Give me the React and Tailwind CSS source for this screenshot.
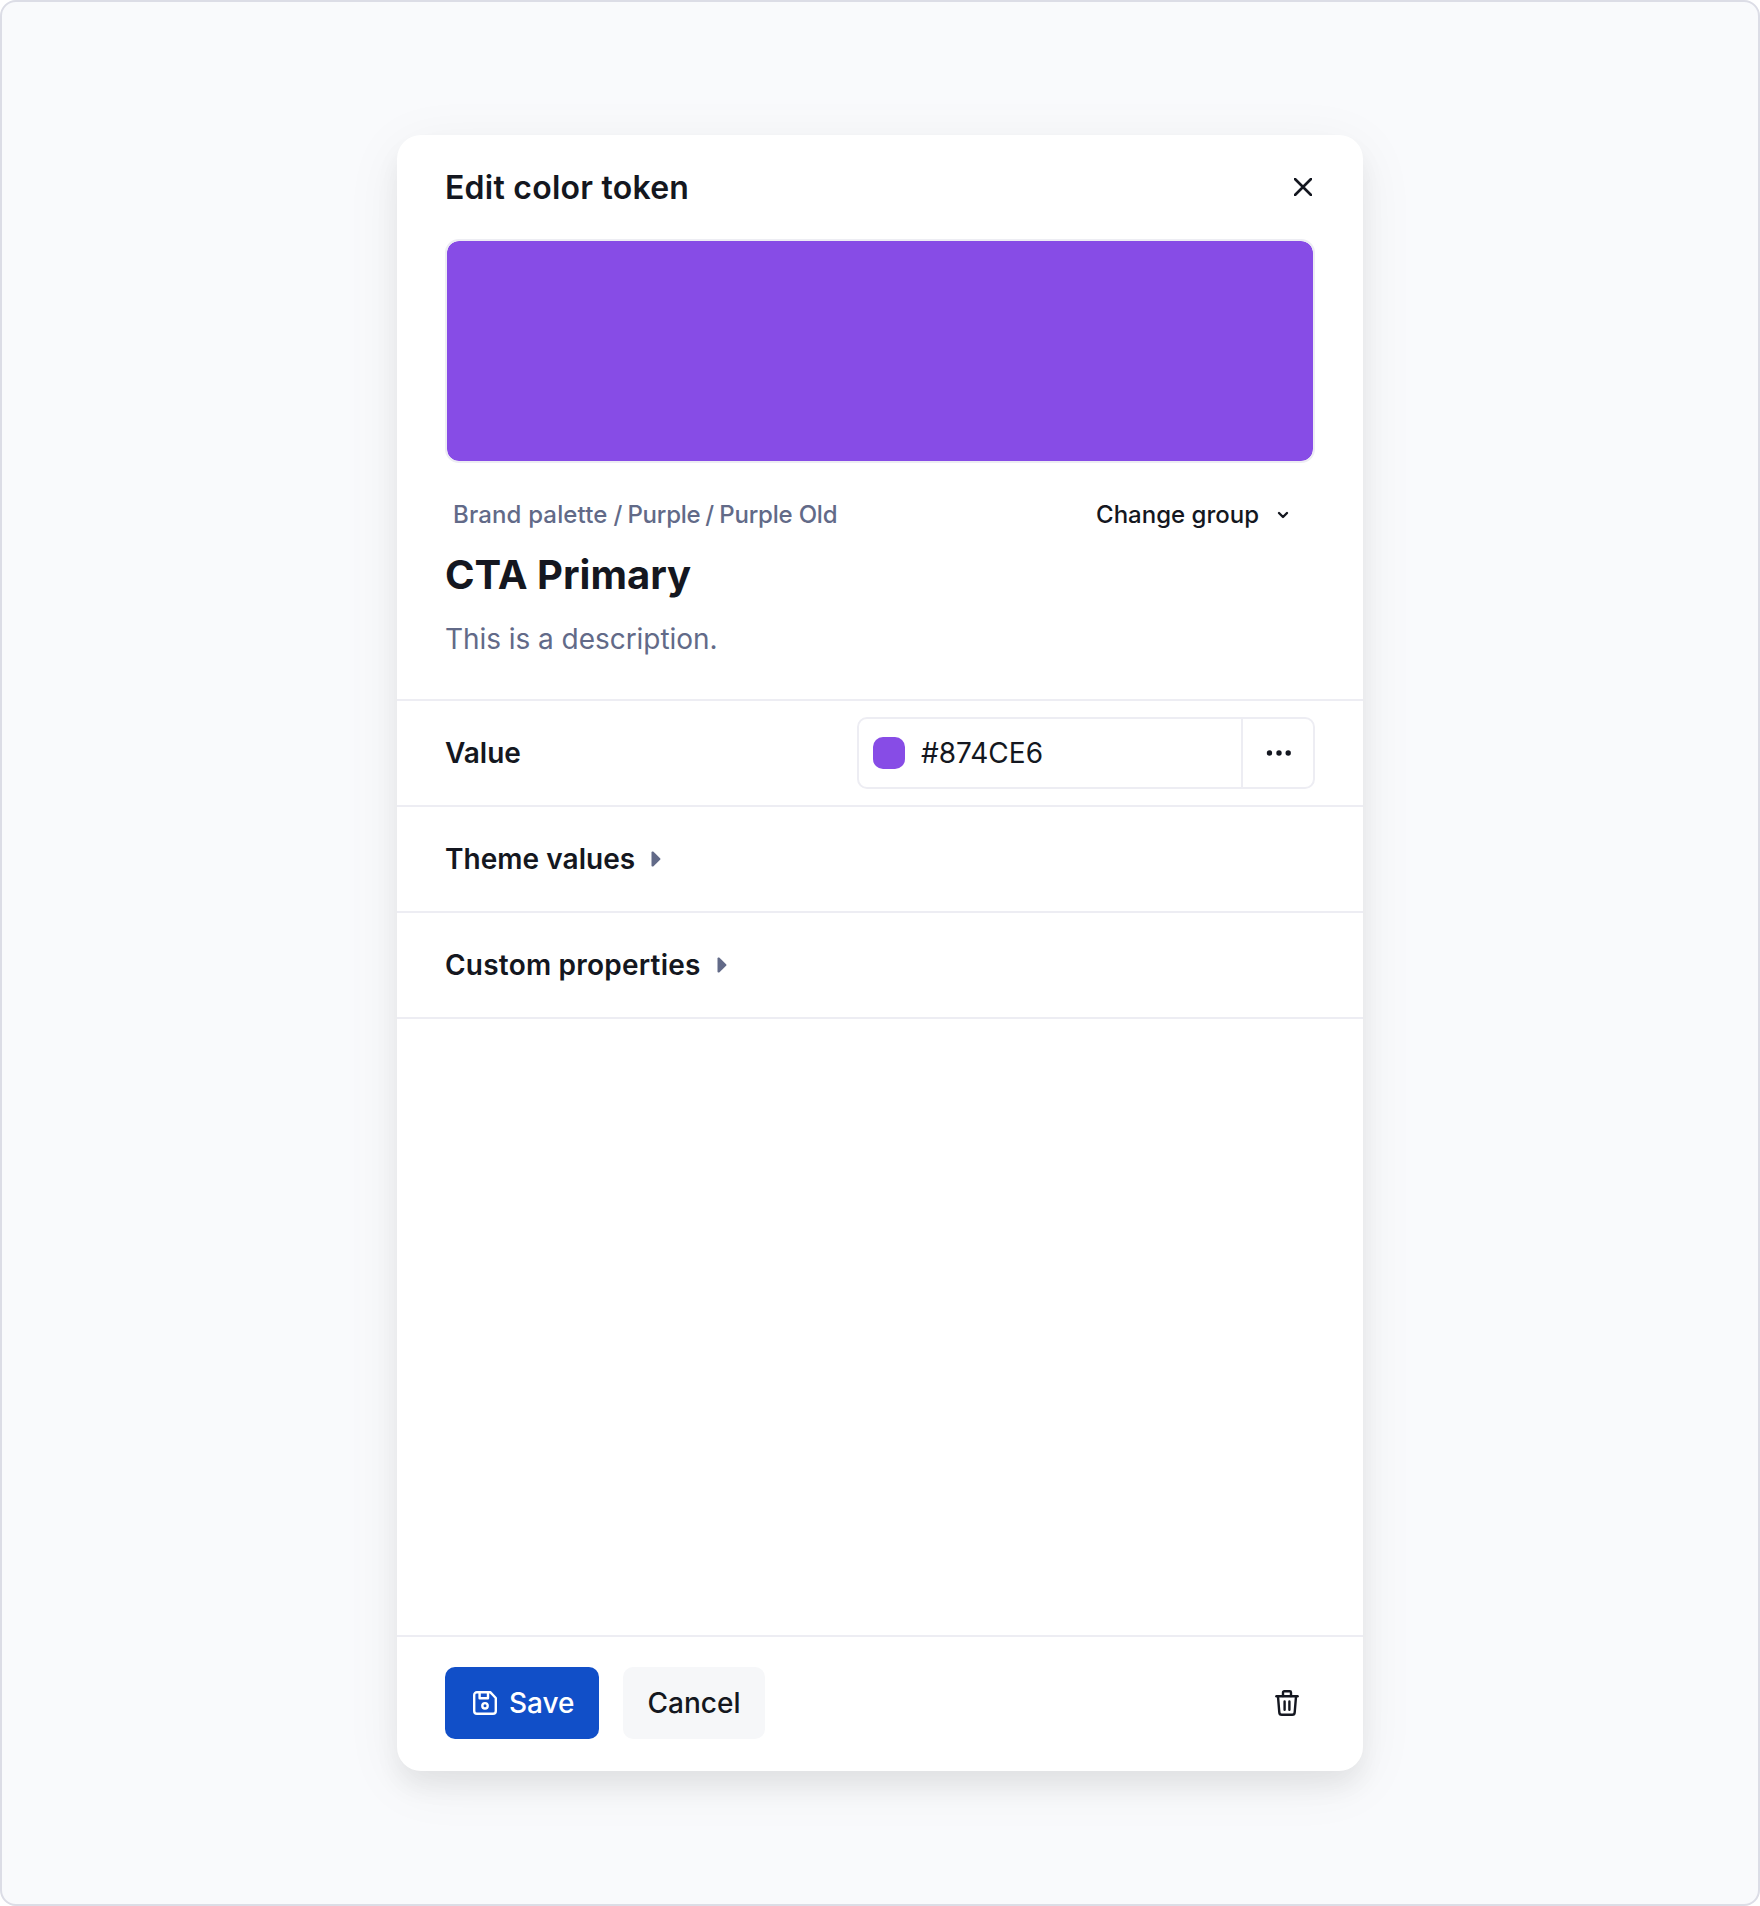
import { useState } from 'react'

const SECTIONS = [
  { id: 'theme', label: 'Theme values', tracking: 'tracking-[0.05px]' },
  { id: 'custom', label: 'Custom properties', tracking: 'tracking-[0.22px]' },
]

function CloseIcon() {
  return (
    <svg width="18" height="18" viewBox="0 0 18 18" fill="none" stroke="currentColor" strokeWidth="2.6" strokeLinecap="round">
      <path d="M1 1l16 16M17 1L1 17" />
    </svg>
  )
}

function ChevronIcon() {
  return (
    <svg width="12" height="8" viewBox="0 0 12 8" fill="none" stroke="currentColor" strokeWidth="2.4" strokeLinecap="round" strokeLinejoin="round">
      <path d="M2 2l4 4 4-4" />
    </svg>
  )
}

function CaretIcon() {
  return (
    <svg width="10" height="16" viewBox="0 0 10 16" fill="currentColor" className="text-[#626a88]">
      <path d="M0.5 1.6C0.5 0.5 1.7 0.1 2.5 0.8L9.1 7.2C9.6 7.7 9.6 8.3 9.1 8.8L2.5 15.2C1.7 15.9 0.5 15.5 0.5 14.4Z" />
    </svg>
  )
}

function DotsIcon() {
  return (
    <svg width="26" height="6" viewBox="0 0 26 6" fill="currentColor">
      <circle cx="4.5" cy="3" r="2.7" />
      <circle cx="14" cy="3" r="2.7" />
      <circle cx="23.2" cy="3" r="2.7" />
    </svg>
  )
}

function SaveIcon() {
  return (
    <svg width="24" height="24" viewBox="0 0 24 24" fill="none" stroke="currentColor" strokeWidth="2.4" strokeLinejoin="round">
      <path d="M4 1.2H17.2L22.8 7V20A2.8 2.8 0 0 1 20 22.8H4A2.8 2.8 0 0 1 1.2 20V4A2.8 2.8 0 0 1 4 1.2Z" />
      <path d="M6.6 1.2V7.2H15V1.2" />
      <circle cx="12" cy="14.8" r="2.7" />
    </svg>
  )
}

function TrashIcon() {
  return (
    <svg width="24" height="26" viewBox="0 0 24 26" fill="none" stroke="currentColor" strokeWidth="2.4" strokeLinecap="round" strokeLinejoin="round">
      <path d="M1.4 6.2H22.6" />
      <path d="M8 6V2.4A1.2 1.2 0 0 1 9.2 1.2H14.8A1.2 1.2 0 0 1 16 2.4V6" />
      <path d="M3 6.6L4.3 22.4A2.5 2.5 0 0 0 6.8 24.8H17.2A2.5 2.5 0 0 0 19.7 22.4L21 6.6" />
      <path d="M9.6 11.5V19.8M14.4 11.5V19.8" />
    </svg>
  )
}

function Section({ label, tracking }) {
  const [open, setOpen] = useState(false)
  return (
    <button
      onClick={() => setOpen(!open)}
      className={`flex h-[106px] w-full items-center gap-4 border-b-2 border-[#ededf3] px-12 text-[28px] leading-9 font-semibold ${tracking}`}
    >
      {label}
      <CaretIcon />
    </button>
  )
}

export default function App() {
  return (
    <div className="bg-white">
      <div className="flex h-[1906px] w-[1760px] justify-center rounded-2xl border-2 border-[#dcdde6] bg-[#f9fafc] pt-[133px] font-['Inter',sans-serif] text-[#141720]">
        <div className="flex h-[1636px] w-[966px] flex-col rounded-3xl bg-white shadow-[0_16px_24px_rgba(0,0,0,0.06),0_12px_60px_rgba(0,0,0,0.06)]">
          <div className="flex h-[104px] items-center justify-between px-12">
            <h2 className="pt-[2px] text-[32px] leading-10 font-semibold tracking-[0.24px]">Edit color token</h2>
            <button className="pr-[3px]" aria-label="Close">
              <CloseIcon />
            </button>
          </div>

          <div className="mx-12 h-56 shrink-0 rounded-[14px] border-2 border-[#ededf3] bg-[#874ce6] bg-clip-padding" />

          <div className="mt-[30px] flex h-11 items-center justify-between pr-[74px] pl-14">
            <nav className="flex items-center text-[24px] leading-8 font-medium text-[#626a88]">
              <span className="tracking-[0.15px]">Brand palette</span>
              <span className="mr-[5px] ml-[6px]">/</span>
              <span className="tracking-[-0.25px]">Purple</span>
              <span className="mx-[5px]">/</span>
              <span className="tracking-[-0.2px]">Purple Old</span>
            </nav>
            <button className="flex items-center gap-[18px] text-[24px] leading-8 font-medium">
              Change group
              <ChevronIcon />
            </button>
          </div>

          <div className="h-[162px] px-12">
            <h1 className="mt-3 text-[40px] leading-[52px] font-bold">CTA Primary</h1>
            <p className="mt-5 text-[28px] leading-9 tracking-[-0.05px] text-[#626a88]">This is a description.</p>
          </div>

          <div className="flex h-[108px] items-center justify-between border-y-2 border-[#ededf3] px-12">
            <span className="text-[28px] leading-9 font-semibold">Value</span>
            <div className="flex h-[72px] w-[458px] rounded-[10px] border-2 border-[#ededf3]">
              <div className="flex flex-1 items-center pl-[14px]">
                <span className="size-8 rounded-[10px] bg-[#874ce6]" />
                <span className="ml-4 text-[28px] leading-9">#874CE6</span>
              </div>
              <button className="flex w-[72px] items-center justify-center border-l-2 border-[#ededf3]" aria-label="More">
                <DotsIcon />
              </button>
            </div>
          </div>

          {SECTIONS.map((s) => (
            <Section key={s.id} label={s.label} tracking={s.tracking} />
          ))}

          <div className="mt-auto flex h-[136px] items-center border-t-2 border-[#ededf3] px-12 pb-[2px]">
            <button className="flex h-[72px] w-[154px] items-center rounded-[10px] bg-[#114fc8] pl-7 text-[28px] font-medium text-white">
              <SaveIcon />
              <span className="ml-3">Save</span>
            </button>
            <button className="ml-6 h-[72px] w-[142px] rounded-[10px] bg-[#f6f7f9] text-[28px] font-medium">Cancel</button>
            <button className="mr-4 ml-auto" aria-label="Delete">
              <TrashIcon />
            </button>
          </div>
        </div>
      </div>
    </div>
  )
}
